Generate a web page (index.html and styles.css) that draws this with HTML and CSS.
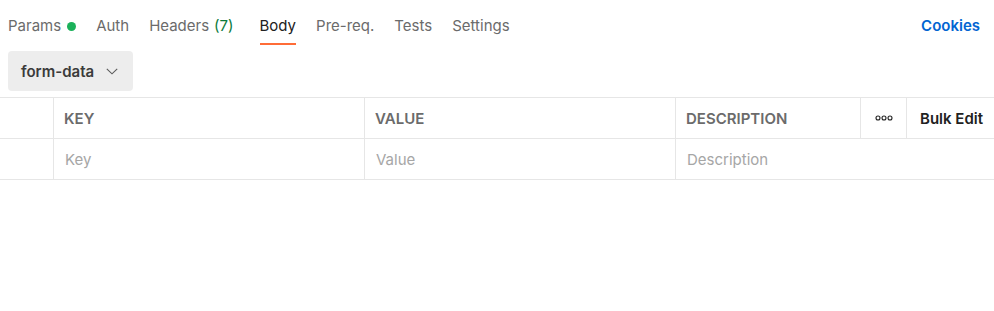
FILE: index.html
```html
<!DOCTYPE html>
<html>
<head>
<meta charset="utf-8">
<link rel="stylesheet" href="styles.css">
</head>
<body>
<div class="tabbar">
  <div class="tabs">
    <div class="tab">Params <span class="dot"></span></div>
    <div class="tab">Auth</div>
    <div class="tab">Headers <span class="count">(7)</span></div>
    <div class="tab active">Body</div>
    <div class="tab">Pre-req.</div>
    <div class="tab">Tests</div>
    <div class="tab">Settings</div>
  </div>
  <div class="cookies">Cookies</div>
</div>
<div class="toolbar">
  <div class="dropdown">
    <span>form-data</span>
    <svg width="12" height="7" viewBox="0 0 12 7"><path d="M0.8 0.8l5.2 5 5.2-5" fill="none" stroke="#5a5a5a" stroke-width="1.1"/></svg>
  </div>
</div>
<div class="table">
  <div class="cell"></div>
  <div class="cell head">KEY</div>
  <div class="cell head">VALUE</div>
  <div class="cell head">DESCRIPTION</div>
  <div class="cell icon"><svg width="18" height="6" viewBox="0 0 18 6"><circle cx="3" cy="3" r="2" fill="none" stroke="#212121" stroke-width="1.1"/><circle cx="9" cy="3" r="2" fill="none" stroke="#212121" stroke-width="1.1"/><circle cx="15" cy="3" r="2" fill="none" stroke="#212121" stroke-width="1.1"/></svg></div>
  <div class="cell bulk">Bulk Edit</div>
  <div class="cell row"></div>
  <div class="cell row ph">Key</div>
  <div class="cell row ph">Value</div>
  <div class="cell row ph span">Description</div>
</div>
</body>
</html>
```
FILE: styles.css
```css
* { box-sizing: border-box; }
body {
  margin: 0;
  font-family: Inter, "Noto Sans", sans-serif;
  font-size: 15px;
  color: #212121;
  background: #fff;
}
.tabbar {
  display: flex;
  justify-content: space-between;
  align-items: flex-start;
  padding: 0 14px 0 8px;
}
.tabs {
  display: flex;
  gap: 20px;
}
.tab {
  padding-top: 16px;
  line-height: 20px;
  height: 45px;
  color: #6b6b6b;
  border-bottom: 2px solid transparent;
  display: flex;
  align-items: flex-start;
}
.tab.active {
  color: #212121;
  border-bottom-color: #ff6c37;
}
.dot {
  display: inline-block;
  width: 9px;
  height: 9px;
  border-radius: 50%;
  background: #1bb15a;
  margin: 6px 0 0 6px;
}
.count {
  color: #0a7a3b;
  margin-left: 5px;
  margin-right: 6px;
}
.cookies {
  padding-top: 16px;
  line-height: 20px;
  color: #0265d2;
  font-weight: 600;
}
.toolbar {
  padding: 6px 8px 6px;
}
.dropdown {
  width: 125px;
  height: 40px;
  background: #ededed;
  border-radius: 4px;
  display: flex;
  align-items: center;
  padding-left: 13px;
  gap: 12px;
  font-weight: 600;
  color: #3b3b3b;
}
.table {
  display: grid;
  grid-template-columns: 54px 311px 311px 185px 46px 1fr;
  border-top: 1px solid #e6e6e6;
}
.cell {
  height: 41px;
  border-bottom: 1px solid #e6e6e6;
  border-right: 1px solid #e6e6e6;
  display: flex;
  align-items: center;
  padding-left: 10px;
}
.head {
  font-weight: 600;
  color: #6b6b6b;
}
.icon {
  padding-left: 0;
  justify-content: center;
}
.bulk {
  border-right: none;
  font-weight: 600;
  color: #212121;
  padding-left: 13px;
}
.ph {
  color: #a6a6a6;
  padding-left: 11px;
}
.span {
  grid-column: span 3;
  border-right: none;
}
```
